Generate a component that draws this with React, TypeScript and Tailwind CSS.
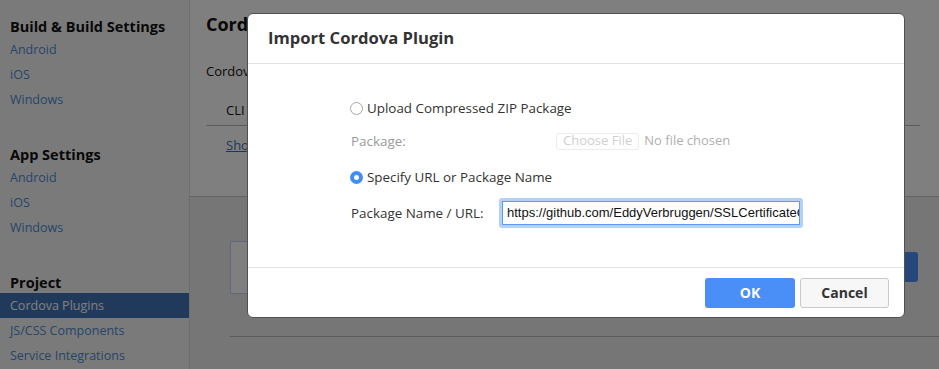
import React from "react";

const ui = { fontFamily: '"Open Sans", "DejaVu Sans", sans-serif' };
const helv = { fontFamily: '"Liberation Sans", Arial, sans-serif' };

function SideSection({ title, items, selected, first }: { title: string; items: string[]; selected?: string; first?: boolean }) {
  return (
    <div className={first ? "" : "mt-[32px]"}>
      <div className="h-[21px] px-[10px] flex items-center text-[14.5px] font-bold text-[#111]">{title}</div>
      {items.map((it) => (
        <div
          key={it}
          className={
            "h-[25px] px-[10px] flex items-center pt-[2px] text-[12.5px] " +
            (it === selected ? "bg-[#4374b8] text-white" : "text-[#4d8bd4]")
          }
        >
          {it}
        </div>
      ))}
    </div>
  );
}

function Radio({ checked }: { checked?: boolean }) {
  return checked ? (
    <span className="w-[13px] h-[13px] rounded-full bg-[#3f8ef5] flex items-center justify-center shrink-0">
      <span className="w-[5px] h-[5px] rounded-full bg-white" />
    </span>
  ) : (
    <span className="w-[13px] h-[13px] rounded-full border border-[#a8a8a8] bg-white shrink-0" />
  );
}

export default function App() {
  return (
    <div className="relative w-[939px] h-[369px] overflow-hidden flex bg-white" style={ui}>
      {/* Sidebar */}
      <aside className="w-[190px] shrink-0 bg-[#f5f5f5] border-r border-[#dcdcdc] pt-4">
        <SideSection first title="Build & Build Settings" items={["Android", "iOS", "Windows"]} />
        <SideSection title="App Settings" items={["Android", "iOS", "Windows"]} />
        <SideSection title="Project" items={["Cordova Plugins", "JS/CSS Components", "Service Integrations"]} selected="Cordova Plugins" />
      </aside>

      {/* Main */}
      <main className="flex-1 flex flex-col">
        <section className="h-[197px] bg-white border-b border-[#c8c8c8] pl-4 pr-[19px]">
          <h1 className="h-[48px] flex items-center text-[18px] font-bold text-[#111]">Cordova Plugins</h1>
          <p className="h-[48px] flex items-center text-[13px] text-[#111]">Cordova CLI version and installed plugins</p>
          <div className="h-[30px] pl-5 flex items-center text-[13px] text-[#111] border-b border-[#bbb]">CLI</div>
          <div className="h-[40px] pl-5 flex items-center text-[13px] text-[#3d6fb0] underline">Show all plugins</div>
        </section>
        <section className="flex-1 bg-[#ececec] pl-10 pt-[44px]">
          <div className="flex items-start gap-[8px] h-[96px] border-b border-[#b4b4b4]">
            <div className="w-[600px] h-[53px] border border-[#bcd4f2] bg-white" />
            <div className="mt-[11px] w-[80px] h-[30px] rounded-[3px] bg-[#4a8ff6]" />
          </div>
        </section>
      </main>

      {/* Overlay */}
      <div className="absolute inset-0 bg-black/50" />

      {/* Dialog */}
      <div className="absolute left-[247px] top-[13px] w-[658px] h-[305px] bg-white border border-[#505050] rounded-[6px] flex flex-col">
        <div className="h-[50px] shrink-0 px-5 flex items-center border-b border-[#e2e2e2]">
          <h2 className="text-[16.6px] font-bold text-[#333]">Import Cordova Plugin</h2>
        </div>
        <div className="flex-1 pl-[102px] pt-[36px] text-[13.4px] text-[#333]">
          <label className="flex items-center gap-[4px] h-[16px]">
            <Radio />
            <span>Upload Compressed ZIP Package</span>
          </label>
          <div className="flex items-center h-[18px] mt-[16px] pl-[1px]">
            <span className="w-[205px] text-[#9a9a9a]">Package:</span>
            <span className="h-[17px] px-[6px] flex items-center border border-[#ececec] rounded-[3px] text-[13px] text-[#cfcfcf]">Choose File</span>
            <span className="ml-[5px] text-[13px] text-[#b0b0b0]">No file chosen</span>
          </div>
          <label className="flex items-center gap-[4px] h-[16px] mt-[19px]">
            <Radio checked />
            <span>Specify URL or Package Name</span>
          </label>
          <div className="flex items-center mt-[13px] pl-[1px]">
            <span className="w-[148px]">Package Name / URL:</span>
            <div className="w-[304px] h-[30px] rounded-[3px] border-[3px] border-[#b3d0f7] overflow-hidden">
              <div className="h-full border border-[#5b9bf0] bg-white px-[4px] flex items-center text-[13px] text-[#111] whitespace-nowrap overflow-hidden" style={helv}>
                https://github.com/EddyVerbruggen/SSLCertificateChecker-PhoneGap-Plugin
              </div>
            </div>
          </div>
        </div>
        <div className="h-[50px] shrink-0 border-t border-[#e2e2e2] flex items-center justify-end gap-[5px] pr-[15px]">
          <button className="w-[90px] h-[30px] rounded-[3px] bg-[#4a8ff8] text-white text-[14px] font-bold">OK</button>
          <button className="w-[89px] h-[30px] rounded-[3px] bg-[#f7f7f7] border border-[#c8c8c8] text-[#333] text-[14px] font-bold">Cancel</button>
        </div>
      </div>
    </div>
  );
}
